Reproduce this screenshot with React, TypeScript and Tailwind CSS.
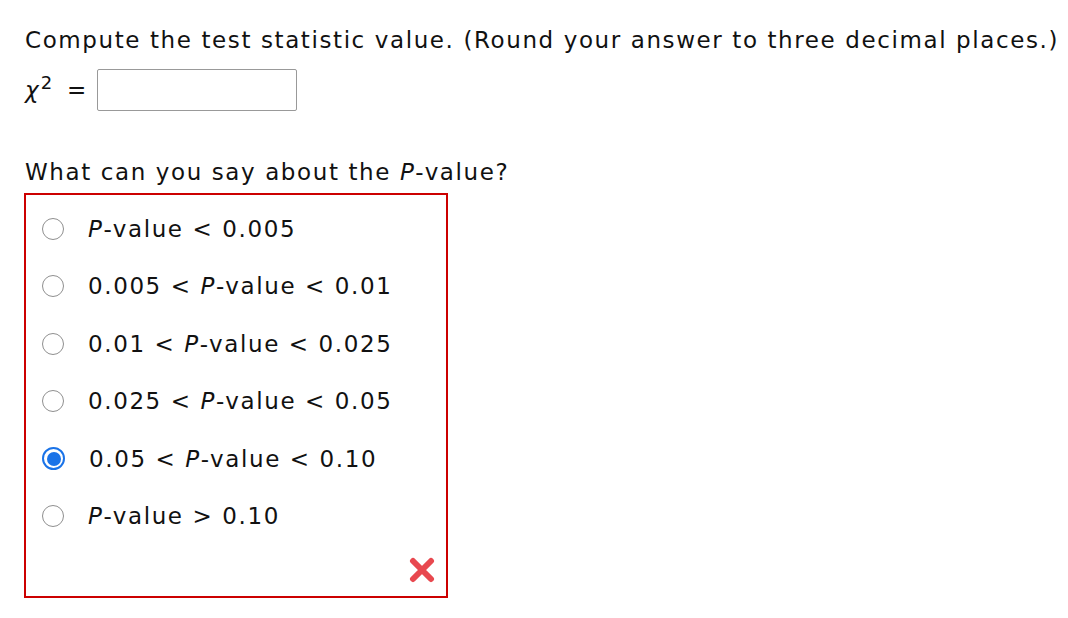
import React from "react";

const options: { pre?: string; post?: string; selected?: boolean }[] = [
  { post: " < 0.005" },
  { pre: "0.005 < ", post: " < 0.01" },
  { pre: "0.01 < ", post: " < 0.025" },
  { pre: "0.025 < ", post: " < 0.05" },
  { pre: "0.05 < ", post: " < 0.10", selected: true },
  { post: " > 0.10" },
];

function Radio({ checked }: { checked?: boolean }) {
  if (checked) {
    return (
      <span className="flex h-[23px] w-[23px] shrink-0 items-center justify-center rounded-full border-2 border-[#1a73e8] bg-white">
        <span className="h-[14px] w-[14px] rounded-full bg-[#1a73e8]" />
      </span>
    );
  }
  return <span className="h-[22px] w-[22px] shrink-0 rounded-full border border-[#8f8f8f] bg-white" />;
}

export default function App() {
  return (
    <div className="min-h-[618px] w-[1068px] bg-white pl-[24px] pt-[24px] text-[23px] tracking-[1.6px] text-[#111] [font-family:'DejaVu_Sans',Verdana,sans-serif]">
      <p className="pl-[1px] leading-[33px]">Compute the test statistic value. (Round your answer to three decimal places.)</p>
      <div className="mt-[12px] flex items-center pl-[1px]">
        <span className="italic tracking-normal">
          χ<sup className="ml-[2px] not-italic text-[18px]">2</sup>
        </span>
        <span className="ml-[15px]">=</span>
        <input className="ml-[9px] h-[42px] w-[200px] rounded-[2px] border border-[#999] bg-white" />
      </div>
      <p className="mt-[45px] pl-[1px] leading-[33px]">
        What can you say about the <i>P</i>-value?
      </p>
      <div className="mt-[4px] flex h-[405px] w-[424px] flex-col border-2 border-[#cc0000] pt-[5px]">
        {options.map((o, i) => (
          <div key={i} className="flex h-[57.5px] items-center gap-[24px] pl-[16px]">
            <Radio checked={o.selected} />
            <span>
              {o.pre}
              <i>P</i>-value{o.post}
            </span>
          </div>
        ))}
        <div className="mt-auto flex justify-end pb-[13px] pr-[10px]">
          <svg width="28" height="26" viewBox="0 0 28 26">
            <path d="M5 4 L23 22 M23 4 L5 22" stroke="#e8484f" strokeWidth="6" strokeLinecap="round" />
          </svg>
        </div>
      </div>
    </div>
  );
}
